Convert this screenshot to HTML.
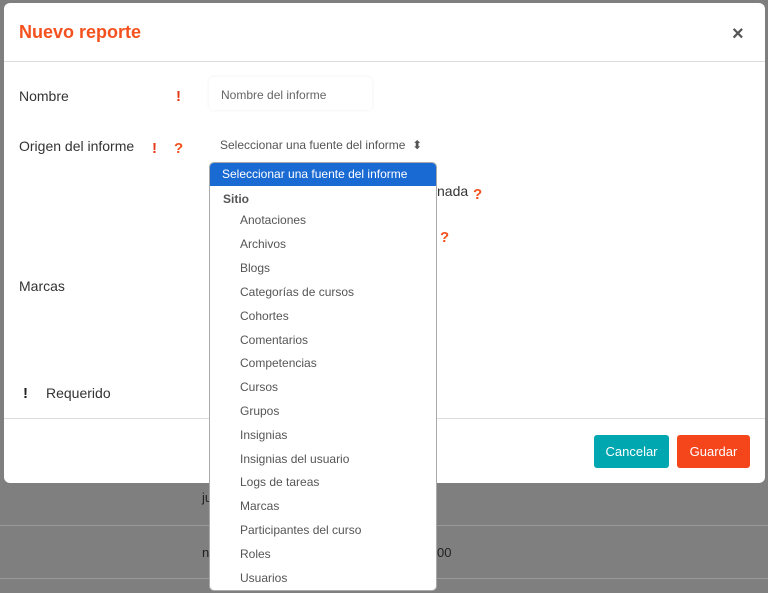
<!DOCTYPE html><html><head><style>
body{margin:0;width:768px;height:593px;background:#7f7f7f;font-family:"Liberation Sans",sans-serif;position:relative;overflow:hidden}
.abs{position:absolute}
.modal{left:4px;top:3px;width:761px;height:480px;background:#fff;border-radius:6px}
.t{font-size:13px;color:#333}
.red{color:#e53817;font-weight:bold}
.dd{left:209px;top:162px;width:228px;height:429px;background:#fff;border:1px solid #aaa;border-radius:5px;box-sizing:border-box;overflow:hidden}
.it{position:absolute;left:30px;font-size:12px;color:#555}
</style></head><body>
<div class="abs" style="left:0;top:525px;width:768px;height:1px;background:#999"></div>
<div class="abs" style="left:0;top:578px;width:768px;height:1px;background:#999"></div>
<div class="abs t" style="left:202px;top:490px;color:#222">ju</div>
<div class="abs t" style="left:202px;top:545px;color:#222">n</div>
<div class="abs t" style="left:437px;top:545px;color:#222">00</div>
<div class="abs modal">
<div class="abs" style="left:15px;top:19px;font-size:18px;font-weight:bold;color:#f4511e">Nuevo reporte</div>
<div class="abs" style="left:728px;top:20px;font-size:20px;color:#555;font-weight:bold">×</div>
<div class="abs" style="left:0;top:58px;width:761px;height:1px;background:#ddd"></div>
<div class="abs t" style="left:15px;top:85px;font-size:14px">Nombre</div>
<div class="abs red" style="left:172px;top:85px;font-size:15px">!</div>
<div class="abs" style="left:205px;top:74px;width:163px;height:33px;border-radius:4px;box-shadow:0 0 3px #eee"></div>
<div class="abs" style="left:217px;top:85px;font-size:12px;color:#666">Nombre del informe</div>
<div class="abs t" style="left:15px;top:135px;font-size:14px">Origen del informe</div>
<div class="abs red" style="left:148px;top:137px;font-size:15px">!</div>
<div class="abs red" style="left:170px;top:137px;font-size:15px;color:#f4511e">?</div>
<div class="abs" style="left:216px;top:135px;font-size:12px;color:#555">Seleccionar una fuente del informe&nbsp;&nbsp;⬍</div>
<div class="abs t" style="left:433px;top:180px;font-size:14px">nada</div>
<div class="abs red" style="left:469px;top:183px;font-size:15px;color:#f4511e">?</div>
<div class="abs red" style="left:436px;top:226px;font-size:15px;color:#f4511e">?</div>
<div class="abs t" style="left:15px;top:275px;font-size:14px">Marcas</div>
<div class="abs" style="left:19px;top:382px;font-size:15px;font-weight:bold;color:#222">!</div>
<div class="abs t" style="left:42px;top:382px;font-size:14px">Requerido</div>
<div class="abs" style="left:0;top:415px;width:761px;height:1px;background:#ddd"></div>
<div class="abs" style="left:590px;top:432px;width:75px;height:33px;background:#00a7b0;border-radius:3px;color:#fff;font-size:13px;text-align:center;line-height:33px">Cancelar</div>
<div class="abs" style="left:673px;top:432px;width:73px;height:33px;background:#f4451b;border-radius:3px;color:#fff;font-size:13px;text-align:center;line-height:33px">Guardar</div>
</div>
<div class="abs dd">
<div class="abs" style="left:0;top:0;width:228px;height:23px;background:#1a6ad4;color:#fff;font-size:12px;line-height:23px;padding-left:12px;box-sizing:border-box">Seleccionar una fuente del informe</div>
<div class="abs" style="left:13px;top:29px;font-size:12px;font-weight:bold;color:#555">Sitio</div>
<div class="it" style="top:50px">Anotaciones</div>
<div class="it" style="top:74px">Archivos</div>
<div class="it" style="top:98px">Blogs</div>
<div class="it" style="top:122px">Categorías de cursos</div>
<div class="it" style="top:146px">Cohortes</div>
<div class="it" style="top:170px">Comentarios</div>
<div class="it" style="top:193px">Competencias</div>
<div class="it" style="top:217px">Cursos</div>
<div class="it" style="top:241px">Grupos</div>
<div class="it" style="top:265px">Insignias</div>
<div class="it" style="top:289px">Insignias del usuario</div>
<div class="it" style="top:312px">Logs de tareas</div>
<div class="it" style="top:336px">Marcas</div>
<div class="it" style="top:360px">Participantes del curso</div>
<div class="it" style="top:384px">Roles</div>
<div class="it" style="top:408px">Usuarios</div>
</div>
</body></html>
